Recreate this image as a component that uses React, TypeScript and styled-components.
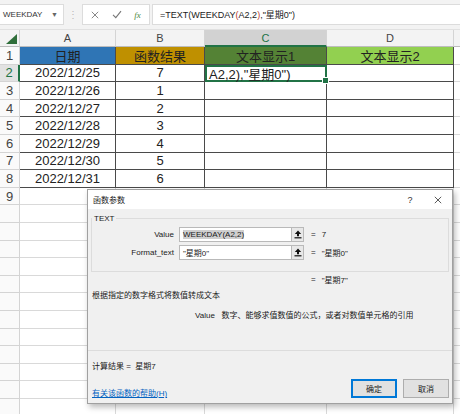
import styled, { createGlobalStyle } from "styled-components";

const GlobalStyle = createGlobalStyle`
  body {
    margin: 0;
    background: #fff;
    font-family: "Liberation Sans", "Noto Sans CJK SC", sans-serif;
  }
`;

const CJK = `"Liberation Sans", "Noto Sans CJK SC", sans-serif`;

const Page = styled.div`
  position: relative;
  width: 460px;
  height: 414px;
  overflow: hidden;
  background: #fff;
`;

/* ---------- formula bar ---------- */

const FormulaBar = styled.div`
  display: flex;
  align-items: center;
  height: 30px;
  box-sizing: border-box;
  padding: 4px 0;
  background: #f3f3f3;
  border-bottom: 1px solid #e1e1e1;
`;

const NameBox = styled.div`
  display: flex;
  align-items: center;
  justify-content: space-between;
  width: 64px;
  height: 21px;
  box-sizing: border-box;
  padding: 0 5px 0 3px;
  background: #fff;
  border: 1px solid #dcdcdc;
  border-left: none;
  font-size: 8px;
  color: #333;
`;

const Caret = styled.span`
  font-size: 7px;
  color: #666;
`;

const Dots = styled.span`
  width: 18px;
  text-align: center;
  color: #b8b8b8;
  font-size: 10px;
`;

const ActionBox = styled.div`
  display: flex;
  align-items: center;
  justify-content: space-around;
  width: 68px;
  height: 21px;
  box-sizing: border-box;
  padding: 0 2px;
  background: #fff;
  border: 1px solid #dcdcdc;
`;

const Fx = styled.span`
  font-family: "Liberation Serif", serif;
  font-style: italic;
  font-size: 9px;
  color: #4b8a3c;
`;

const FormulaInput = styled.div`
  flex: 1;
  height: 21px;
  margin-left: 2px;
  box-sizing: border-box;
  padding: 0 7px;
  display: flex;
  align-items: center;
  background: #fff;
  border: 1px solid #dcdcdc;
  border-right: none;
  font-size: 9px;
  color: #222;
  white-space: nowrap;
`;

const Paren = styled.span`
  color: #c0392b;
`;

/* ---------- sheet ---------- */

const Sheet = styled.div`
  display: grid;
  grid-template-columns: 20px 96px 89px 122px 127px 1fr;
  grid-template-rows: 17px;
  grid-auto-rows: 17.6px;
`;

const Corner = styled.div`
  position: relative;
  background: #f3f3f3;
  border-right: 1px solid #d4d4d4;
  border-bottom: 1px solid #bdbdbd;
`;

const CornerMark = styled.div`
  position: absolute;
  right: 2px;
  bottom: 2px;
  width: 0;
  height: 0;
  border-left: 11px solid transparent;
  border-bottom: 10px solid #2f6e3a;
`;

const ColHead = styled.div<{ $active?: boolean }>`
  display: flex;
  align-items: center;
  justify-content: center;
  box-sizing: border-box;
  font-size: 11px;
  color: ${(p) => (p.$active ? "#217346" : "#444")};
  background: ${(p) => (p.$active ? "#d2d2d2" : "#f3f3f3")};
  border-right: 1px solid #d4d4d4;
  border-bottom: ${(p) => (p.$active ? "2px solid #217346" : "1px solid #bdbdbd")};
`;

const RowHead = styled.div<{ $active?: boolean }>`
  display: flex;
  align-items: center;
  justify-content: center;
  box-sizing: border-box;
  font-size: 13px;
  color: ${(p) => (p.$active ? "#217346" : "#444")};
  background: ${(p) => (p.$active ? "#e2e2e2" : "#fafafa")};
  border-right: ${(p) => (p.$active ? "2px solid #217346" : "1px solid #d4d4d4")};
  border-bottom: 1px solid #d4d4d4;
`;

const Cell = styled.div<{ $bg?: string; $table?: boolean; $left?: boolean }>`
  display: flex;
  align-items: center;
  justify-content: ${(p) => (p.$left ? "flex-start" : "center")};
  box-sizing: border-box;
  padding: 0 3px;
  font-family: ${CJK};
  font-size: 13px;
  color: #222;
  white-space: nowrap;
  overflow: visible;
  background: ${(p) => p.$bg ?? "#fff"};
  border-right: 1px solid ${(p) => (p.$table ? "#4a4a4a" : "#d9d9d9")};
  border-bottom: 1px solid ${(p) => (p.$table ? "#4a4a4a" : "#d9d9d9")};
`;

const ActiveCell = styled(Cell)`
  position: relative;
  border: 2px solid #217346;
  padding-left: 2px;
  z-index: 1;
`;

const FillHandle = styled.span`
  position: absolute;
  right: -4px;
  bottom: -4px;
  width: 5px;
  height: 5px;
  background: #217346;
  border: 1px solid #fff;
`;

/* ---------- dialog ---------- */

const Dialog = styled.div`
  position: absolute;
  left: 87px;
  top: 189px;
  width: 366px;
  height: 215px;
  box-sizing: border-box;
  display: flex;
  flex-direction: column;
  background: #f0f0f0;
  border: 1px solid #a0a0a0;
  box-shadow: 2px 3px 6px rgba(0, 0, 0, 0.28);
  font-family: ${CJK};
  font-size: 8px;
  color: #1a1a1a;
  z-index: 5;
`;

const TitleBar = styled.div`
  display: flex;
  align-items: center;
  height: 19px;
  flex-shrink: 0;
  padding-left: 5px;
  background: #fff;
`;

const TitleText = styled.span`
  flex: 1;
`;

const TitleButton = styled.span`
  width: 28px;
  display: flex;
  justify-content: center;
  font-size: 9px;
  color: #333;
`;

const Body = styled.div`
  flex: 1;
  display: flex;
  flex-direction: column;
  padding: 0 3px 5px 3px;
`;

const Group = styled.fieldset`
  margin: 5px 0 0 0;
  padding: 4px 0 4px 0;
  height: 58px;
  box-sizing: border-box;
  border: 1px solid #dcdcdc;
  display: flex;
  flex-direction: column;
  gap: 3px;
`;

const Legend = styled.legend`
  padding: 0 2px;
  margin-left: 0;
  font-size: 8px;
`;

const ParamRow = styled.div<{ $indent?: number }>`
  display: flex;
  align-items: center;
  height: 15px;
  padding-left: ${(p) => p.$indent ?? 0}px;
`;

const ParamLabel = styled.span`
  width: 82px;
  text-align: right;
  margin-right: 5px;
`;

const ParamInput = styled.div`
  width: 112px;
  height: 15px;
  box-sizing: border-box;
  display: flex;
  align-items: center;
  padding-left: 3px;
  background: #fff;
  border: 1px solid #b9b9b9;
  border-right: none;
`;

const Selected = styled.span`
  background: #cfcfcf;
`;

const RefButton = styled.div`
  width: 13px;
  height: 15px;
  box-sizing: border-box;
  display: flex;
  align-items: center;
  justify-content: center;
  background: #e8e8e8;
  border: 1px solid #b9b9b9;
`;

const Eq = styled.span`
  margin: 0 6px 0 7px;
`;

const Text = styled.div<{ $top?: number; $indent?: number }>`
  margin-top: ${(p) => p.$top ?? 0}px;
  padding-left: ${(p) => p.$indent ?? 1}px;
  line-height: 10px;
  white-space: nowrap;
`;

const Separator = styled.div`
  margin: 29px -3px 0 -3px;
  height: 1px;
  background: #dcdcdc;
`;

const Footer = styled.div`
  display: flex;
  align-items: center;
  margin-top: 7px;
`;

const HelpLink = styled.a`
  flex: 1;
  padding-left: 1px;
  color: #0563c1;
  text-decoration: underline;
  margin-top: 8px;
`;

const Button = styled.button<{ $primary?: boolean }>`
  width: 46px;
  height: 19px;
  margin-left: ${(p) => (p.$primary ? 0 : 6)}px;
  padding: 0;
  box-sizing: border-box;
  font-family: ${CJK};
  font-size: 8px;
  color: #1a1a1a;
  background: #e1e1e1;
  border: ${(p) => (p.$primary ? "2px solid #0078d7" : "1px solid #adadad")};
`;

const Up = () => (
  <svg width="8" height="9" viewBox="0 0 8 9">
    <path d="M4 0.5 L7.2 4 H5 V6.2 H3 V4 H0.8 Z" fill="#111" />
    <rect x="0.5" y="7.2" width="7" height="1.2" fill="#111" />
  </svg>
);

const Cross = ({ size = 8, color = "#666" }: { size?: number; color?: string }) => (
  <svg width={size} height={size} viewBox="0 0 10 10">
    <path d="M1 1 L9 9 M9 1 L1 9" stroke={color} strokeWidth="1.1" />
  </svg>
);

const Check = () => (
  <svg width="10" height="9" viewBox="0 0 10 9">
    <path d="M1 4.8 L3.8 7.6 L9 1.2" stroke="#777" strokeWidth="1.1" fill="none" />
  </svg>
);

const dates = ["2022/12/25", "2022/12/26", "2022/12/27", "2022/12/28", "2022/12/29", "2022/12/30", "2022/12/31"];
const results = ["7", "1", "2", "3", "4", "5", "6"];
const totalRows = 21;

export default function App() {
  const rows = [];
  for (let r = 1; r <= totalRows; r++) {
    const table = r <= 8;
    const cells = [];
    if (r === 1) {
      cells.push(
        <Cell key="a" $table $bg="#2f75b5">日期</Cell>,
        <Cell key="b" $table $bg="#bf9000">函数结果</Cell>,
        <Cell key="c" $table $bg="#548235">文本显示1</Cell>,
        <Cell key="d" $table $bg="#92d050">文本显示2</Cell>,
        <Cell key="e" />
      );
    } else if (table) {
      cells.push(
        <Cell key="a" $table>{dates[r - 2]}</Cell>,
        <Cell key="b" $table>{results[r - 2]}</Cell>,
        r === 2 ? (
          <ActiveCell key="c" $table $left>
            A2,2),"星期0")
            <FillHandle />
          </ActiveCell>
        ) : (
          <Cell key="c" $table />
        ),
        <Cell key="d" $table />,
        <Cell key="e" />
      );
    } else {
      for (let c = 0; c < 5; c++) cells.push(<Cell key={c} />);
    }
    rows.push(
      <RowHead key={`h${r}`} $active={r === 2}>
        {r <= 9 ? r : ""}
      </RowHead>,
      ...cells
    );
  }

  return (
    <Page>
      <GlobalStyle />
      <FormulaBar>
        <NameBox>
          WEEKDAY <Caret>▼</Caret>
        </NameBox>
        <Dots>⋮</Dots>
        <ActionBox>
          <Cross size={8} color="#777" />
          <Check />
          <Fx>fx</Fx>
        </ActionBox>
        <FormulaInput>
          =TEXT(WEEKDAY<Paren>(</Paren>A2,2<Paren>)</Paren>,"星期0")
        </FormulaInput>
      </FormulaBar>

      <Sheet>
        <Corner>
          <CornerMark />
        </Corner>
        <ColHead>A</ColHead>
        <ColHead>B</ColHead>
        <ColHead $active>C</ColHead>
        <ColHead>D</ColHead>
        <ColHead />
        {rows}
      </Sheet>

      <Dialog>
        <TitleBar>
          <TitleText>函数参数</TitleText>
          <TitleButton>?</TitleButton>
          <TitleButton>
            <Cross size={8} color="#444" />
          </TitleButton>
        </TitleBar>
        <Body>
          <Group>
            <Legend>TEXT</Legend>
            <ParamRow>
              <ParamLabel>Value</ParamLabel>
              <ParamInput>
                <Selected>WEEKDAY(A2,2)</Selected>
              </ParamInput>
              <RefButton>
                <Up />
              </RefButton>
              <Eq>=</Eq>
              <span>7</span>
            </ParamRow>
            <ParamRow>
              <ParamLabel>Format_text</ParamLabel>
              <ParamInput>"星期0"</ParamInput>
              <RefButton>
                <Up />
              </RefButton>
              <Eq>=</Eq>
              <span>"星期0"</span>
            </ParamRow>
          </Group>
          <ParamRow $indent={213}>
            <Eq>=</Eq>
            <span>"星期7"</span>
          </ParamRow>
          <Text $top={4}>根据指定的数字格式将数值转成文本</Text>
          <Text $top={10} $indent={104}>
            Value&nbsp;&nbsp;&nbsp;数字、能够求值数值的公式，或者对数值单元格的引用
          </Text>
          <Separator />
          <Text $top={11}>计算结果 = &nbsp;星期7</Text>
          <Footer>
            <HelpLink>有关该函数的帮助(H)</HelpLink>
            <Button $primary>确定</Button>
            <Button>取消</Button>
          </Footer>
        </Body>
      </Dialog>
    </Page>
  );
}
